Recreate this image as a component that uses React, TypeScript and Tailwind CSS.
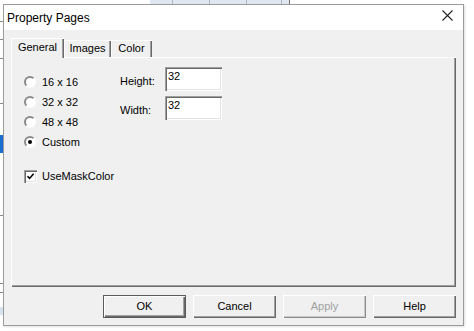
import React from 'react';

function Radio({ checked }: { checked?: boolean }) {
  return (
    <span className="relative flex h-[12px] w-[12px] items-center justify-center rounded-full border-[2px] border-t-[#8a8a8a] border-l-[#8a8a8a] border-b-[#ffffff] border-r-[#ffffff] bg-white">
      {checked && <span className="h-[4px] w-[4px] rounded-full bg-black" />}
    </span>
  );
}

function Checkbox({ checked }: { checked?: boolean }) {
  return (
    <span className="flex h-[13px] w-[13px] items-center justify-center bg-white shadow-[inset_1px_1px_#a0a0a0,inset_2px_2px_#696969,inset_-1px_-1px_#ffffff,inset_-2px_-2px_#e3e3e3]">
      {checked && (
        <svg width="9" height="9" viewBox="0 0 9 9">
          <path d="M1.5 4.2L3.6 6.4L7.6 1.8" fill="none" stroke="#000" strokeWidth="1.6" />
        </svg>
      )}
    </span>
  );
}

function Field({ value }: { value: string }) {
  return (
    <div className="h-[24px] w-[57px] bg-white pl-[3px] pt-[3px] text-[11px] leading-[13px] shadow-[inset_1px_1px_#a0a0a0,inset_2px_2px_#696969,inset_-1px_-1px_#ffffff,inset_-2px_-2px_#e3e3e3]">
      {value}
    </div>
  );
}

function DlgButton({ label, primary, disabled }: { label: string; primary?: boolean; disabled?: boolean }) {
  if (primary) {
    return (
      <button className="h-[23px] w-[83px] border border-[#5a5a5a] bg-[#f0f0f0] text-[11px] text-black shadow-[inset_1px_1px_#ffffff,inset_-1px_-1px_#696969,inset_-2px_-2px_#a0a0a0]">
        {label}
      </button>
    );
  }
  if (disabled) {
    return (
      <button className="h-[23px] w-[83px] bg-[#f0f0f0] text-[11px] text-[#a0a0a0] shadow-[inset_1px_1px_#ffffff,inset_-1px_-1px_#8c8c8c,inset_-2px_-2px_#c8c8c8]">
        {label}
      </button>
    );
  }
  return (
    <button className="h-[23px] w-[83px] bg-[#f0f0f0] text-[11px] text-black shadow-[inset_1px_1px_#ffffff,inset_-1px_-1px_#696969,inset_-2px_-2px_#a0a0a0]">
      {label}
    </button>
  );
}

export default function App() {
  const sizes = ['16 x 16', '32 x 32', '48 x 48', 'Custom'];

  return (
    <div className="relative h-[331px] w-[474px] overflow-hidden bg-white font-['Liberation_Sans',Arial,sans-serif] text-black">
      {/* app behind the dialog */}
      <div className="absolute inset-0">
        <div className="absolute left-[150px] top-0 flex h-[4px] w-[140px] bg-[#dfe7f2]">
          <div className="w-[23px] border-r border-[#aab6c8]" />
          <div className="w-[37px] border-r border-[#aab6c8]" />
          <div className="w-[37px] border-r border-[#aab6c8]" />
          <div className="w-[35px] border-r border-[#aab6c8]" />
          <div className="flex-1 border-r border-[#6f6f6f]" />
        </div>
        <div className="absolute left-0 top-[21px] h-px w-[3px] bg-[#8a8a8a]" />
        <div className="absolute left-0 top-[39px] h-px w-[3px] bg-[#8a8a8a]" />
        <div className="absolute left-0 top-[58px] h-px w-[3px] bg-[#8a8a8a]" />
        <div className="absolute left-0 top-[103px] h-px w-[3px] bg-[#8a8a8a]" />
        <div className="absolute left-0 top-[135px] h-[18px] w-[3px] bg-[#1b6fd1]" />
        <div className="absolute left-0 top-[215px] h-px w-[3px] bg-[#8a8a8a]" />
        <div className="absolute left-0 top-[283px] h-px w-[3px] bg-[#8a8a8a]" />
        <div className="absolute left-0 top-[292px] h-px w-[3px] bg-[#8a8a8a]" />
        <div className="absolute left-0 top-[307px] h-[8px] w-[3px] bg-[#d8e2f1]" />
      </div>

      {/* dialog */}
      <div className="absolute left-[3px] top-[4px] flex h-[322px] w-[461px] flex-col border border-[#9b9b9b] bg-[#f0f0f0] shadow-[1px_1px_2px_rgba(0,0,0,0.12)]">
        <div className="flex h-[25px] items-center justify-between bg-white pl-[3px] pr-[10px]">
          <span className="text-[12px]">Property Pages</span>
          <svg className="mb-[4px]" width="11" height="11" viewBox="0 0 11 11">
            <path d="M0.5 0.5L10.5 10.5M10.5 0.5L0.5 10.5" stroke="#222" strokeWidth="1.1" />
          </svg>
        </div>

        <div className="flex flex-1 flex-col px-[7px] pb-[7px] pt-[8px]">
          {/* tabs */}
          <div className="flex h-[19px] items-end text-[11px]">
            <div className="relative z-10 -mb-px flex h-[20px] w-[53px] items-center justify-center bg-[#f0f0f0] pb-px shadow-[inset_1px_1px_#ffffff,inset_-1px_0_#696969,inset_-2px_0_#a0a0a0]">
              General
            </div>
            <div className="flex h-[17px] w-[47px] items-center justify-center shadow-[inset_1px_1px_#ffffff,inset_-1px_0_#696969,inset_-2px_0_#a0a0a0]">
              Images
            </div>
            <div className="flex h-[17px] w-[41px] items-center justify-center shadow-[inset_1px_1px_#ffffff,inset_-1px_0_#696969,inset_-2px_0_#a0a0a0]">
              Color
            </div>
          </div>

          {/* General page */}
          <div className="flex h-[230px] pl-[13px] pt-[10px] text-[11px] shadow-[inset_1px_1px_#ffffff,inset_-1px_-1px_#696969,inset_-2px_-2px_#a0a0a0]">
            <div className="mt-[5px] flex w-[96px] flex-col">
              {sizes.map((s) => (
                <div key={s} className="flex h-[20px] items-center gap-[6px]">
                  <Radio checked={s === 'Custom'} />
                  <span>{s}</span>
                </div>
              ))}
              <div className="mt-[14px] flex h-[20px] items-center gap-[5px]">
                <Checkbox checked />
                <span>UseMaskColor</span>
              </div>
            </div>

            <div className="grid h-fit grid-cols-[45px_57px] gap-y-[5px]">
              <div className="flex h-[24px] items-center pt-[5px]">Height:</div>
              <Field value="32" />
              <div className="flex h-[24px] items-center pt-[4px]">Width:</div>
              <Field value="32" />
            </div>
          </div>

          {/* buttons */}
          <div className="mt-[8px] flex justify-end gap-[7px]">
            <DlgButton label="OK" primary />
            <DlgButton label="Cancel" />
            <DlgButton label="Apply" disabled />
            <DlgButton label="Help" />
          </div>
        </div>
      </div>
    </div>
  );
}
